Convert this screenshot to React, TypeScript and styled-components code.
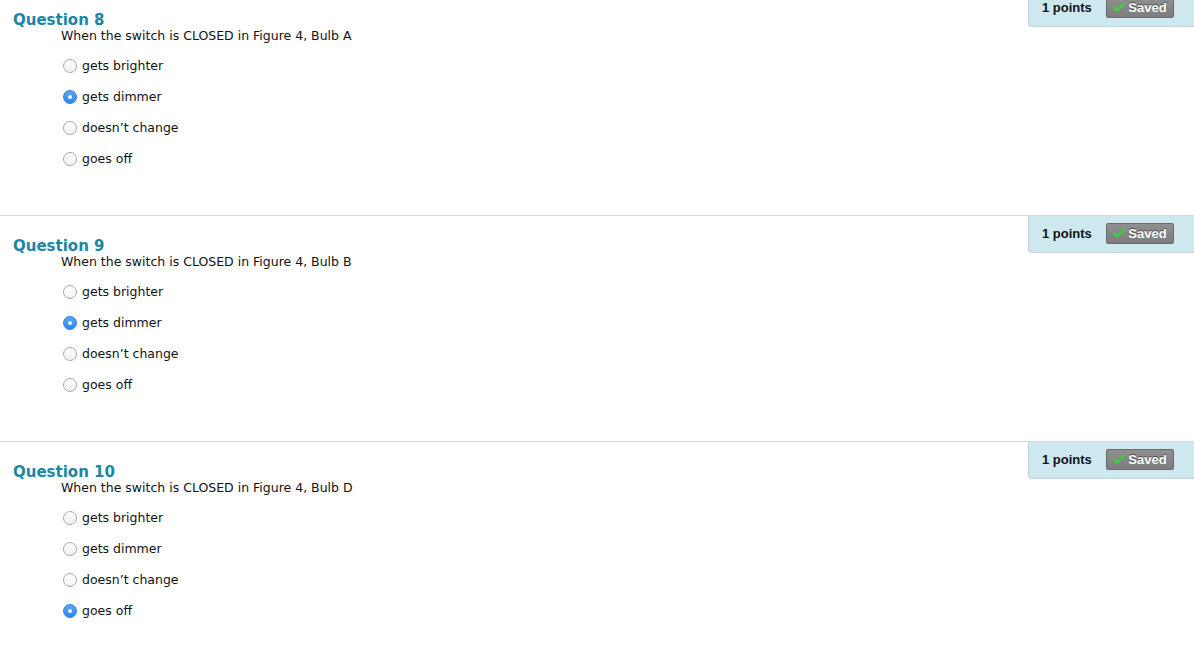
import React from "react";
import styled, { createGlobalStyle } from "styled-components";

const GlobalStyle = createGlobalStyle`
  html, body {
    margin: 0;
    padding: 0;
    background: #ffffff;
    overflow: hidden;
  }
  body {
    font-family: "DejaVu Sans", "Liberation Sans", sans-serif;
    color: #222;
  }
`;

const Page = styled.div`
  margin-top: -11px;
  width: 1194px;
`;

const Block = styled.section<{ $first?: boolean }>`
  display: flex;
  justify-content: space-between;
  align-items: flex-start;
  height: 225px;
  border-top: 1px solid ${(p) => (p.$first ? "transparent" : "#d6d6d6")};
`;

const Body = styled.div`
  display: flex;
  flex-direction: column;
  padding-left: 13px;
  padding-top: 22px;
`;

const Title = styled.h3`
  margin: 0;
  font-size: 15px;
  line-height: 17px;
  font-weight: bold;
  color: #1a87a4;
`;

const Prompt = styled.p`
  margin: -1px 0 0 48px;
  font-size: 12.5px;
  line-height: 16px;
  color: #111;
`;

const Options = styled.ul`
  list-style: none;
  margin: 6px 0 0 50px;
  padding: 0;
`;

const Option = styled.li`
  display: flex;
  align-items: center;
  height: 31px;
  font-size: 12.5px;
  color: #111;
`;

const Radio = styled.span<{ $on?: boolean }>`
  position: relative;
  box-sizing: border-box;
  width: 14px;
  height: 14px;
  border-radius: 50%;
  margin-right: 5px;
  border: 1px solid ${(p) => (p.$on ? "#2f7fe6" : "#a9a9a9")};
  background: ${(p) =>
    p.$on
      ? "linear-gradient(#5aa6fb, #2d86f3)"
      : "linear-gradient(#ffffff, #f1f1f1)"};

  &::after {
    content: "";
    display: ${(p) => (p.$on ? "block" : "none")};
    position: absolute;
    left: 4px;
    top: 4px;
    width: 4px;
    height: 4px;
    border-radius: 50%;
    background: #fff;
  }
`;

const PointsBox = styled.div`
  display: flex;
  align-items: center;
  gap: 14px;
  box-sizing: border-box;
  width: 166px;
  height: 37px;
  padding: 0 0 2px 13px;
  background: #cde9ef;
  border-left: 1px solid #c3d4d8;
  border-bottom: 1px solid #c3d4d8;
  border-bottom-left-radius: 4px;
`;

const Points = styled.span`
  width: 50px;
  font-family: "Liberation Sans", Arial, sans-serif;
  font-size: 13px;
  font-weight: bold;
  color: #111;
  white-space: nowrap;
`;

const SavedButton = styled.span`
  display: inline-flex;
  align-items: center;
  justify-content: center;
  gap: 3px;
  box-sizing: border-box;
  width: 68px;
  height: 21px;
  border: 1px solid #6b6b6b;
  border-radius: 2px;
  background: linear-gradient(#8f8f8f, #7d7d7d);
  color: #fff;
  font-family: "Liberation Sans", Arial, sans-serif;
  font-size: 13px;
  font-weight: bold;
  text-shadow: 0 -1px 0 #4a4a4a;
`;

const Check = () => (
  <svg width="12" height="10" viewBox="0 0 12 10">
    <path
      d="M1 5.5 L4.3 8.5 L11 1.5"
      fill="none"
      stroke="#3fd03a"
      strokeWidth="2.4"
      strokeLinecap="round"
      strokeLinejoin="round"
    />
  </svg>
);

const choices = ["gets brighter", "gets dimmer", "doesn’t change", "goes off"];

const questions = [
  { n: 8, bulb: "A", picked: 1 },
  { n: 9, bulb: "B", picked: 1 },
  { n: 10, bulb: "D", picked: 3 },
];

export default function App() {
  return (
    <>
      <GlobalStyle />
      <Page>
        {questions.map((q, i) => (
          <Block key={q.n} $first={i === 0}>
            <Body>
              <Title>Question {q.n}</Title>
              <Prompt>When the switch is CLOSED in Figure 4, Bulb {q.bulb}</Prompt>
              <Options>
                {choices.map((c, idx) => (
                  <Option key={c}>
                    <Radio $on={idx === q.picked} />
                    {c}
                  </Option>
                ))}
              </Options>
            </Body>
            <PointsBox>
              <Points>1 points</Points>
              <SavedButton>
                <Check />
                Saved
              </SavedButton>
            </PointsBox>
          </Block>
        ))}
      </Page>
    </>
  );
}
